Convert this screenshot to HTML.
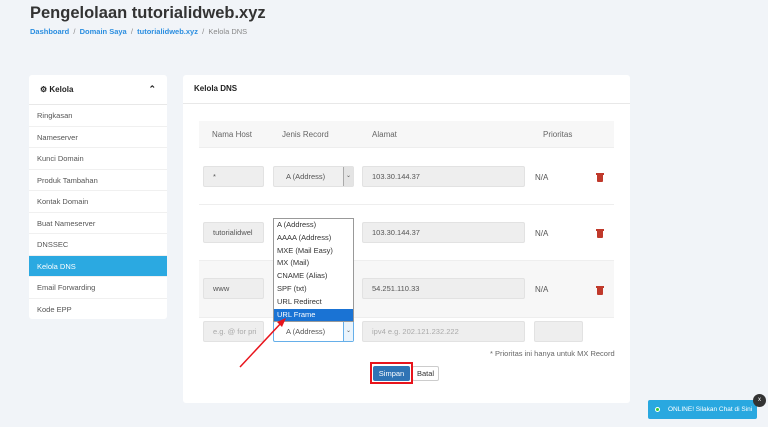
<!DOCTYPE html>
<html><head><meta charset="utf-8"><style>
*{margin:0;padding:0;box-sizing:border-box}
body{width:768px;height:427px;overflow:hidden;background:#f1f4f8;font-family:"Liberation Sans",sans-serif;position:relative;color:#444}
.a{position:absolute}
.t{font-size:8px;color:#555;white-space:nowrap}
.inp{position:absolute;background:#eee;border:1px solid #e2e2e2;border-radius:2px;font-size:7.5px;color:#555;padding-left:9px;display:flex;align-items:center;height:21px}
.side div{height:21.5px;border-bottom:1px solid #f0f0f0;padding-left:8px;font-size:7.5px;line-height:21px;color:#555}
.trash{position:absolute;width:6px;height:7px;background:#c0392b;border-radius:0 0 1px 1px}
.trash:before{content:"";position:absolute;left:-1px;top:-2px;width:8px;height:1.5px;background:#c0392b}
.dd div{height:12.8px;font-size:7.5px;line-height:12.8px;padding-left:3px;color:#333}
</style></head><body>
<div class="a" style="left:30px;top:4px;font-size:16.5px;font-weight:bold;color:#333">Pengelolaan tutorialidweb.xyz</div>
<div class="a t" style="left:30px;top:27px;font-size:7.5px;color:#888"><span style="color:#2b8ee0;font-weight:bold">Dashboard</span> &nbsp;/&nbsp; <span style="color:#2b8ee0;font-weight:bold">Domain Saya</span> &nbsp;/&nbsp; <span style="color:#2b8ee0;font-weight:bold">tutorialidweb.xyz</span> &nbsp;/&nbsp; Kelola DNS</div>

<div class="a" style="left:29px;top:75px;width:138px;height:244px;background:#fff;border-radius:3px">
<div style="height:30px;border-bottom:1px solid #e8e8e8;font-size:8px;font-weight:bold;color:#222;line-height:29px;padding-left:11px">⚙ Kelola<span style="position:absolute;right:11px;font-size:9px">⌃</span></div>
<div class="side">
<div>Ringkasan</div><div>Nameserver</div><div>Kunci Domain</div><div>Produk Tambahan</div><div>Kontak Domain</div><div>Buat Nameserver</div><div>DNSSEC</div><div style="background:#2ba9e1;color:#fff">Kelola DNS</div><div>Email Forwarding</div><div style="border:none">Kode EPP</div>
</div></div>

<div class="a" style="left:183px;top:75px;width:447px;height:328px;background:#fff;border-radius:3px">
<div style="height:29px;border-bottom:1px solid #e8e8e8;font-size:8px;font-weight:bold;color:#222;line-height:28px;padding-left:11px">Kelola DNS</div>
</div>
<div class="a" style="left:199px;top:121px;width:415px;height:27px;background:#f7f7f7;border-bottom:1px solid #eee"></div>
<div class="a t" style="left:212px;top:130px;color:#666">Nama Host</div>
<div class="a t" style="left:282px;top:130px;color:#666">Jenis Record</div>
<div class="a t" style="left:372px;top:130px;color:#666">Alamat</div>
<div class="a t" style="left:543px;top:130px;color:#666">Prioritas</div>
<div class="a" style="left:199px;top:204px;width:415px;height:1px;background:#eee"></div>
<div class="a" style="left:199px;top:260px;width:415px;height:58px;background:#f7f7f7;border-top:1px solid #eee;border-bottom:1px solid #eee"></div>

<div class="inp" style="left:203px;top:166px;width:61px">*</div>
<div class="inp" style="left:273px;top:166px;width:81px;padding-left:12px;background:#f0f0f0">A (Address)<span style="position:absolute;right:0;top:0;width:10px;height:19px;border-left:1px solid #aaa;background:#e4e4e4;font-size:6px;text-align:center;line-height:19px">⌄</span></div>
<div class="inp" style="left:362px;top:166px;width:163px">103.30.144.37</div>
<div class="a t" style="left:535px;top:173px">N/A</div>
<div class="trash" style="left:597px;top:175px"></div>

<div class="inp" style="left:203px;top:222px;width:61px">tutorialidwel</div>
<div class="inp" style="left:362px;top:222px;width:163px">103.30.144.37</div>
<div class="a t" style="left:535px;top:229px">N/A</div>
<div class="trash" style="left:597px;top:231px"></div>

<div class="inp" style="left:203px;top:278px;width:61px">www</div>
<div class="inp" style="left:273px;top:278px;width:81px"></div>
<div class="inp" style="left:362px;top:278px;width:163px">54.251.110.33</div>
<div class="a t" style="left:535px;top:285px">N/A</div>
<div class="trash" style="left:597px;top:288px"></div>

<div class="inp" style="left:203px;top:321px;width:61px;color:#aaa">e.g. @ for pri</div>
<div class="inp" style="left:273px;top:321px;width:81px;padding-left:12px;background:#fff;border-color:#66afe9">A (Address)<span style="position:absolute;right:0;top:0;width:10px;height:19px;border-left:1px solid #66afe9;background:#eaf4fc;font-size:6px;text-align:center;line-height:19px">⌄</span></div>
<div class="inp" style="left:362px;top:321px;width:163px;color:#aaa">ipv4 e.g. 202.121.232.222</div>
<div class="inp" style="left:534px;top:321px;width:49px"></div>

<div class="a dd" style="left:273px;top:218px;width:81px;height:104px;background:#fff;border:1px solid #999">
<div>A (Address)</div><div>AAAA (Address)</div><div>MXE (Mail Easy)</div><div>MX (Mail)</div><div>CNAME (Alias)</div><div>SPF (txt)</div><div>URL Redirect</div><div style="background:#1a73d4;color:#fff">URL Frame</div>
</div>

<div class="a t" style="left:490px;top:349px;font-size:7.5px;color:#666">* Prioritas ini hanya untuk MX Record</div>
<div class="a" style="left:373px;top:366px;width:37px;height:15px;background:#2f74b5;border-radius:2px;color:#fff;font-size:7.5px;text-align:center;line-height:15px">Simpan</div>
<div class="a" style="left:412px;top:366px;width:27px;height:15px;background:#fff;border:1px solid #ccc;border-radius:2px;color:#333;font-size:7.5px;text-align:center;line-height:13px">Batal</div>
<div class="a" style="left:370px;top:362px;width:43px;height:22px;border:2px solid #e8141c"></div>
<svg class="a" style="left:0;top:0" width="768" height="427"><line x1="240" y1="367" x2="282" y2="322" stroke="#e8141c" stroke-width="1.5"/><polygon points="286,318 277,322 282,327" fill="#e8141c"/></svg>

<div class="a" style="left:648px;top:400px;width:109px;height:19px;background:#29a8e0;border-radius:2px;color:#fff;font-size:6.5px;line-height:19px;padding-left:20px;white-space:nowrap">ONLINE! Silakan Chat di Sini</div>
<div class="a" style="left:655px;top:407px;width:5px;height:5px;border-radius:50%;background:#3c3;border:1px solid #fff"></div>
<div class="a" style="left:753px;top:394px;width:13px;height:13px;border-radius:50%;background:#333;color:#fff;font-size:6px;text-align:center;line-height:13px">x</div>
</body></html>
